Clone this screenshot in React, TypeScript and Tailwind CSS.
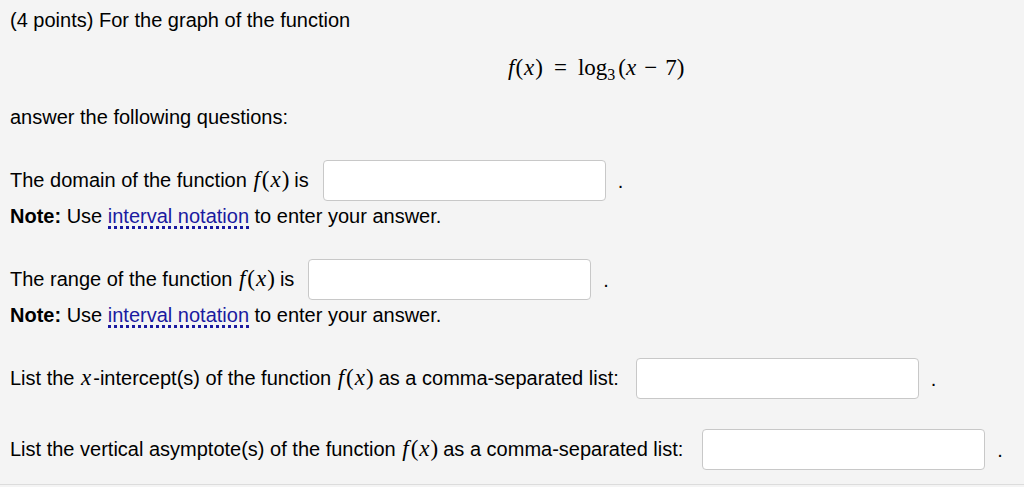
import React from "react";

const serif = { fontFamily: '"Liberation Serif", "Times New Roman", serif' };

const Fx = () => (
  <span className="text-[23px] ml-[1px] mr-[5px]" style={serif}>
    <i className="mr-[2px]">f</i>(<i className="mx-[1px]">x</i>)
  </span>
);

const Box = () => (
  <div className="w-[283px] h-[41px] bg-white border border-[#c8c8c8] rounded-[4px] shrink-0" />
);

const Link = () => (
  <span className="text-[#1a1aa0] border-b-[3px] border-dotted border-[#1a1aa0] leading-[19px] inline-block">
    interval notation
  </span>
);

export default function App() {
  return (
    <div
      className="w-[1024px] h-[487px] bg-[#f4f4f4] text-[20px] text-black overflow-hidden"
      style={{ fontFamily: '"Liberation Sans", Helvetica, Arial, sans-serif' }}
    >
      <div className="h-[485px] border-b border-[#dcdcdc] pl-[10px] pt-[8px]">
        <div className="h-[24px] leading-[24px] whitespace-nowrap">(4 points) For the graph of the function</div>
        <div
          className="mt-[24px] h-[24px] leading-[24px] pl-[498px] text-[23px] whitespace-nowrap"
          style={serif}
        >
          <i className="mr-[1px]">f</i>(<i className="mx-[1px]">x</i>)<span className="mx-[11px]">=</span>log
          <sub className="text-[16px] relative top-[5px]">3</sub>
          <span className="ml-[3px]">(</span>
          <i>x</i>
          <span className="mx-[8px]">−</span>7)
        </div>
        <div className="mt-[25px] h-[24px] leading-[24px] whitespace-nowrap">answer the following questions:</div>

        <div className="mt-[31px] h-[41px] flex items-center whitespace-nowrap">
          <span>
            The domain of the function&nbsp;<Fx />is
          </span>
          <div className="ml-[14px]">
            <Box />
          </div>
          <span className="ml-[12px]">.</span>
        </div>
        <div className="mt-[3px] h-[24px] leading-[24px] whitespace-nowrap">
          <b>Note:</b> Use <Link /> to enter your answer.
        </div>

        <div className="mt-[31px] h-[41px] flex items-center whitespace-nowrap">
          <span>
            The range of the function&nbsp;<Fx />is
          </span>
          <div className="ml-[14px]">
            <Box />
          </div>
          <span className="ml-[12px]">.</span>
        </div>
        <div className="mt-[3px] h-[24px] leading-[24px] whitespace-nowrap">
          <b>Note:</b> Use <Link /> to enter your answer.
        </div>

        <div className="mt-[31px] h-[41px] flex items-center whitespace-nowrap">
          <span>
            List the{" "}
            <i className="text-[23px] ml-[1px] mr-[2px]" style={serif}>
              x
            </i>
            -intercept(s) of the function&nbsp;<Fx />as a comma-separated list:
          </span>
          <div className="ml-[17px]">
            <Box />
          </div>
          <span className="ml-[12px]">.</span>
        </div>

        <div className="mt-[30px] h-[41px] flex items-center whitespace-nowrap">
          <span>
            List the vertical asymptote(s) of the function&nbsp;<Fx />as a comma-separated list:
          </span>
          <div className="ml-[19px]">
            <Box />
          </div>
          <span className="ml-[12px]">.</span>
        </div>
      </div>
    </div>
  );
}
